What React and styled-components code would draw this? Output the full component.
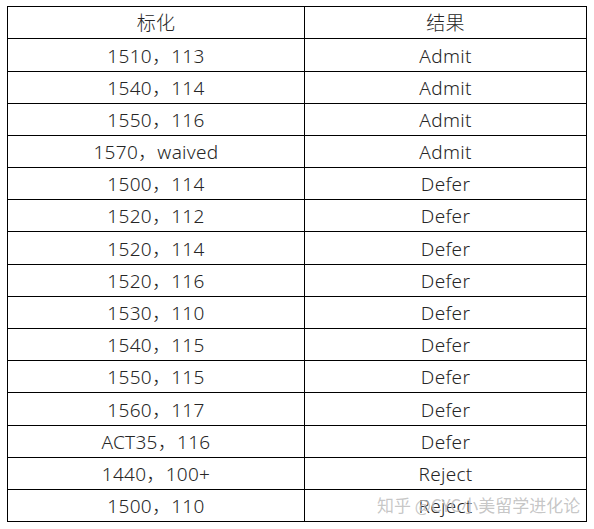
import React from "react";
import styled, { createGlobalStyle } from "styled-components";

const Global = createGlobalStyle`
  html, body { margin: 0; padding: 0; background: #fff; }
  body { font-family: "Noto Sans", "Noto Sans CJK SC", sans-serif; }
`;

const Page = styled.div`
  position: relative;
  width: 594px;
  height: 529px;
  padding: 6px 0 0 7px;
  box-sizing: border-box;
  background: #fff;
`;

const Table = styled.div`
  display: grid;
  grid-template-columns: 297px 281px;
  grid-template-rows: 32px 33px 32px 32px 32px 32px 32px 33px 32px 32px 32px 32px 33px 32px 32px 31px;
  width: 580px;
  border: 1px solid #000;
  box-sizing: border-box;
`;

const Cell = styled.div`
  display: flex;
  align-items: center;
  justify-content: center;
  box-sizing: border-box;
  border-bottom: ${(p) => (p.$last ? "none" : "1px solid #000")};
  border-right: ${(p) => (p.$first ? "1px solid #000" : "none")};
  font-size: 19px;
  font-weight: 300;
  letter-spacing: 0.3px;
  color: #262626;
  line-height: 1;
  white-space: pre;
  padding-top: 2px;
`;

const Watermark = styled.div`
  position: absolute;
  left: 377px;
  top: 495px;
  font-family: "Noto Sans CJK SC", sans-serif;
  font-size: 17px;
  line-height: 20px;
  color: rgba(150, 150, 150, 0.55);
  text-shadow: 0 0 1px rgba(255, 255, 255, 0.8);
  white-space: pre;
  pointer-events: none;
`;

const rows = [
  ["标化", "结果"],
  ["1510，113", "Admit"],
  ["1540，114", "Admit"],
  ["1550，116", "Admit"],
  ["1570，waived", "Admit"],
  ["1500，114", "Defer"],
  ["1520，112", "Defer"],
  ["1520，114", "Defer"],
  ["1520，116", "Defer"],
  ["1530，110", "Defer"],
  ["1540，115", "Defer"],
  ["1550，115", "Defer"],
  ["1560，117", "Defer"],
  ["ACT35，116", "Defer"],
  ["1440，100+", "Reject"],
  ["1500，110", "Reject"],
];

export default function App() {
  return (
    <>
      <Global />
      <Page>
        <Table>
          {rows.map((r, i) => (
            <React.Fragment key={i}>
              <Cell $first $last={i === rows.length - 1}>{r[0]}</Cell>
              <Cell $last={i === rows.length - 1}>{r[1]}</Cell>
            </React.Fragment>
          ))}
        </Table>
        <Watermark>知乎 @CYC小美留学进化论</Watermark>
      </Page>
    </>
  );
}
